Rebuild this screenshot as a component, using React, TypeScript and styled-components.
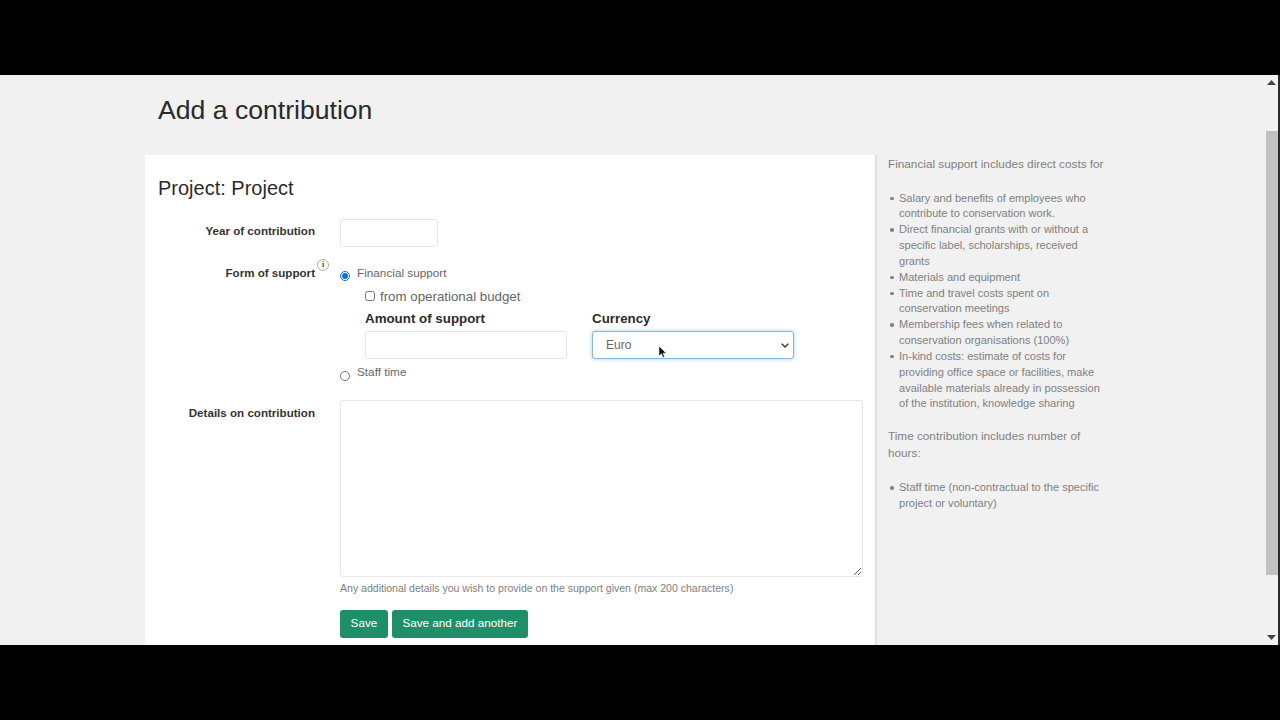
import React from 'react';
import styled, { createGlobalStyle } from 'styled-components';

const GlobalStyle = createGlobalStyle`
  html, body {
    margin: 0;
    padding: 0;
    height: 720px;
    overflow: hidden;
    background: #000;
    font-family: "Liberation Sans", Arial, sans-serif;
  }
`;

const chevron =
  "url(\"data:image/svg+xml,%3Csvg xmlns='http://www.w3.org/2000/svg' width='8' height='5'%3E%3Cpath d='M.7.7 4 4l3.3-3.3' fill='none' stroke='%23333' stroke-width='1.4'/%3E%3C/svg%3E\")";

const Screen = styled.div`
  display: flex;
  flex-direction: column;
  width: 1280px;
  height: 720px;
  padding: 75px 0;
  box-sizing: border-box;
  background: #000;
`;

const Viewport = styled.div`
  position: relative;
  display: flex;
  height: 570px;
  background: #f1f1f1;
  overflow: hidden;
`;

const Page = styled.main`
  flex: 1;
  display: flex;
  flex-direction: column;
  padding-left: 145px;
`;

const PageTitle = styled.h1`
  margin: 0;
  height: 80px;
  padding: 19px 0 0 13px;
  box-sizing: border-box;
  font-size: 26.6px;
  line-height: 32px;
  font-weight: 400;
  color: #2b2b2b;
`;

const Columns = styled.div`
  display: flex;
  flex: 1;
`;

const Card = styled.section`
  width: 732px;
  box-sizing: border-box;
  padding: 20px 13px 0 13px;
  background: #fff;
  border-right: 2px solid #e0e0e0;
`;

const CardTitle = styled.h2`
  margin: 0 0 18px;
  font-size: 20px;
  line-height: 26px;
  font-weight: 400;
  color: #2b2b2b;
`;

const FormRow = styled.div<{ $mb: number }>`
  display: grid;
  grid-template-columns: 157px 1fr;
  column-gap: 25px;
  margin-bottom: ${(p) => p.$mb}px;
`;

const RowLabel = styled.label<{ $pt: number }>`
  position: relative;
  padding-top: ${(p) => p.$pt}px;
  text-align: right;
  font-size: 11.6px;
  line-height: 16px;
  font-weight: 700;
  color: #333;
`;

const InfoMark = styled.span`
  position: absolute;
  right: -14px;
  top: -6px;
  width: 12px;
  height: 12px;
  box-sizing: border-box;
  border: 1px solid #b0b0b0;
  border-radius: 50%;
  font-family: "Liberation Serif", serif;
  font-size: 8px;
  line-height: 10px;
  text-align: center;
  font-weight: 700;
  color: #444;
`;

const TextInput = styled.input<{ $w: number }>`
  display: block;
  width: ${(p) => p.$w}px;
  height: 28px;
  box-sizing: border-box;
  border: 1px solid #e6e6e6;
  border-radius: 3px;
  background: #fff;
  outline: none;
`;

const RadioLine = styled.div<{ $mb?: number }>`
  display: flex;
  align-items: flex-start;
  gap: 7px;
  margin-bottom: ${(p) => p.$mb ?? 0}px;
`;

const Radio = styled.input`
  width: 10px;
  height: 10px;
  margin: 6px 0 0;
  accent-color: #0b6fe0;
`;

const RadioText = styled.span<{ $mt?: number }>`
  margin-top: ${(p) => p.$mt ?? 0}px;
  font-size: 11.75px;
  line-height: 16px;
  color: #666;
`;

const Nested = styled.div`
  padding-left: 25px;
`;

const CheckLine = styled.label`
  display: flex;
  align-items: center;
  gap: 5px;
  height: 16px;
  margin-bottom: 7px;
  font-size: 13.3px;
  color: #666;
`;

const Check = styled.input`
  width: 10px;
  height: 10px;
  margin: 0;
`;

const AmountGrid = styled.div`
  display: flex;
  gap: 25px;
  margin-bottom: 6px;
`;

const Field = styled.div`
  display: flex;
  flex-direction: column;
  gap: 4px;
`;

const FieldLabel = styled.label`
  font-size: 13.33px;
  line-height: 16px;
  font-weight: 700;
  color: #2b2b2b;
`;

const CurrencySelect = styled.select`
  appearance: none;
  width: 202px;
  height: 28px;
  box-sizing: border-box;
  padding: 0 0 1px 13px;
  border: 1px solid #8ab6dc;
  border-radius: 3px;
  background: #fff ${chevron} no-repeat right 4px center;
  box-shadow: 0 0 4px rgba(110, 175, 225, 0.6);
  font-family: "Liberation Sans", Arial, sans-serif;
  font-size: 12px;
  color: #666;
  outline: none;
`;

const Details = styled.textarea`
  display: block;
  width: 523px;
  height: 177px;
  box-sizing: border-box;
  border: 1px solid #e6e6e6;
  border-radius: 3px;
  background: #fff;
  outline: none;
`;

const Hint = styled.p`
  margin: 4px 0 14px;
  font-size: 10.54px;
  line-height: 15px;
  color: #808080;
`;

const Actions = styled.div`
  display: flex;
  gap: 4px;
`;

const Button = styled.button`
  height: 28px;
  padding: 0 10.6px 3px;
  border: 0;
  border-radius: 3px;
  background: #1f8f6a;
  color: #fff;
  font-family: "Liberation Sans", Arial, sans-serif;
  font-size: 11.7px;
`;

const Aside = styled.aside`
  width: 218px;
  padding: 0 0 0 11px;
  font-size: 11.75px;
  color: #808080;
`;

const AsideText = styled.p<{ $mb: number }>`
  margin: 0 0 ${(p) => p.$mb}px;
  line-height: 17px;
`;

const AsideList = styled.ul`
  margin: 0 0 14.5px;
  padding: 0 0 0 11px;
  list-style: none;
  font-size: 11.05px;
  line-height: 15.85px;
`;

const AsideItem = styled.li`
  position: relative;

  &::before {
    content: '';
    position: absolute;
    left: -9px;
    top: 6px;
    width: 3.5px;
    height: 3.5px;
    border-radius: 50%;
    background: #808080;
  }
`;

const Scrollbar = styled.div`
  width: 15px;
  display: flex;
  flex-direction: column;
  align-items: center;
  box-sizing: border-box;
  border-right: 2px solid #2a2a2a;
  background: #f1f1f1;
`;

const ScrollArrow = styled.svg`
  flex: none;
  width: 9px;
  height: 5px;
  margin: 5px 0;
`;

const ScrollTrack = styled.div`
  flex: 1;
  width: 100%;
  padding: 41px 0 55px 1px;
  box-sizing: border-box;
  display: flex;
`;

const ScrollThumb = styled.div`
  flex: 1;
  background: #c1c1c1;
`;

const Pointer = styled.svg`
  position: absolute;
  left: 659px;
  top: 271px;
  width: 8px;
  height: 12px;
`;

const reasons = [
  'Salary and benefits of employees who contribute to conservation work.',
  'Direct financial grants with or without a specific label, scholarships, received grants',
  'Materials and equipment',
  'Time and travel costs spent on conservation meetings',
  'Membership fees when related to conservation organisations (100%)',
  'In-kind costs: estimate of costs for providing office space or facilities, make available materials already in possession of the institution, knowledge sharing',
];

export default function App() {
  return (
    <Screen>
      <GlobalStyle />
      <Viewport>
        <Page>
          <PageTitle>Add a contribution</PageTitle>
          <Columns>
            <Card>
              <CardTitle>Project: Project</CardTitle>
              <FormRow $mb={18}>
                <RowLabel $pt={4}>Year of contribution</RowLabel>
                <TextInput $w={98} />
              </FormRow>
              <FormRow $mb={19}>
                <RowLabel $pt={0}>
                  Form of support
                  <InfoMark>i</InfoMark>
                </RowLabel>
                <div>
                  <RadioLine $mb={7}>
                    <Radio type="radio" name="form" defaultChecked />
                    <RadioText>Financial support</RadioText>
                  </RadioLine>
                  <Nested>
                    <CheckLine>
                      <Check type="checkbox" />
                      from operational budget
                    </CheckLine>
                    <AmountGrid>
                      <Field>
                        <FieldLabel>Amount of support</FieldLabel>
                        <TextInput $w={202} />
                      </Field>
                      <Field>
                        <FieldLabel>Currency</FieldLabel>
                        <CurrencySelect defaultValue="Euro">
                          <option>Euro</option>
                        </CurrencySelect>
                      </Field>
                    </AmountGrid>
                  </Nested>
                  <RadioLine>
                    <Radio type="radio" name="form" />
                    <RadioText $mt={-1}>Staff time</RadioText>
                  </RadioLine>
                </div>
              </FormRow>
              <FormRow $mb={0}>
                <RowLabel $pt={5}>Details on contribution</RowLabel>
                <div>
                  <Details />
                  <Hint>Any additional details you wish to provide on the support given (max 200 characters)</Hint>
                  <Actions>
                    <Button>Save</Button>
                    <Button>Save and add another</Button>
                  </Actions>
                </div>
              </FormRow>
            </Card>
            <Aside>
              <AsideText $mb={18.5}>Financial support includes direct costs for</AsideText>
              <AsideList>
                {reasons.map((reason) => (
                  <AsideItem key={reason}>{reason}</AsideItem>
                ))}
              </AsideList>
              <AsideText $mb={19.5}>Time contribution includes number of hours:</AsideText>
              <AsideList>
                <AsideItem>Staff time (non-contractual to the specific project or voluntary)</AsideItem>
              </AsideList>
            </Aside>
          </Columns>
        </Page>
        <Scrollbar>
          <ScrollArrow viewBox="0 0 9 5">
            <path d="M4.5 0 9 5H0z" fill="#444" />
          </ScrollArrow>
          <ScrollTrack>
            <ScrollThumb />
          </ScrollTrack>
          <ScrollArrow viewBox="0 0 9 5">
            <path d="M4.5 5 0 0h9z" fill="#444" />
          </ScrollArrow>
        </Scrollbar>
        <Pointer viewBox="0 0 8 12">
          <path d="M0 0v10l2.4-2.2L4 11.5l1.6-.7L4 7.2h3.2z" fill="#111" stroke="#fff" strokeWidth="0.5" />
        </Pointer>
      </Viewport>
    </Screen>
  );
}
